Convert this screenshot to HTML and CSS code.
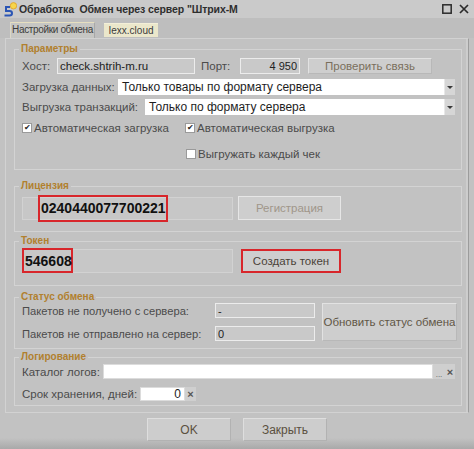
FILE: index.html
```html
<!DOCTYPE html>
<html lang="ru">
<head>
<meta charset="utf-8">
<title>Обмен через сервер</title>
<link rel="stylesheet" href="styles.css">
</head>
<body>
<div class="window">
  <div class="titlebar">
    <svg class="app-icon" width="14" height="15" viewBox="0 0 14 15">
      <path d="M2 5 H7 M3 5 V9 H6.5 Q9 9 9 11.2 Q9 13.5 6.5 13.5 H1.5" fill="none" stroke="#2a55b5" stroke-width="2"/>
      <circle cx="10.5" cy="3.8" r="3.2" fill="#f7d54a" stroke="#e0a020" stroke-width="0.8"/>
    </svg>
    <span class="title">Обработка&nbsp; Обмен через сервер "Штрих-М</span>
    <div class="win-ctrls">
      <svg width="10" height="10" viewBox="0 0 10 10"><rect x="0.8" y="0.8" width="8.4" height="8.4" fill="none" stroke="#2b2b2b" stroke-width="1.5"/></svg>
      <svg width="10" height="10" viewBox="0 0 10 10"><path d="M1 1 L9 9 M9 1 L1 9" stroke="#2b2b2b" stroke-width="1.7"/></svg>
    </div>
  </div>

  <div class="tabs">
    <div class="tab tab-active">Настройки обмена</div>
    <div class="tab tab-cloud">Iexx.cloud</div>
  </div>

  <div class="panel">
    <fieldset class="group g-params">
      <legend>Параметры</legend>
      <div class="row r-host">
        <span class="lbl w-host">Хост:</span>
        <div class="field grey host">check.shtrih-m.ru</div>
        <span class="lbl w-port">Порт:</span>
        <div class="field grey port">4 950</div>
        <div class="btn btn-check">Проверить связь</div>
      </div>
      <div class="row r-sel1">
        <span class="lbl w-sel1">Загрузка данных:</span>
        <div class="select sel1"><span class="sel-text">Только товары по формату сервера</span><span class="drop"></span></div>
      </div>
      <div class="row r-sel2">
        <span class="lbl w-sel2">Выгрузка транзакций:</span>
        <div class="select sel2"><span class="sel-text">Только по формату сервера</span><span class="drop"></span></div>
      </div>
      <div class="row r-checks">
        <label class="check w-check1"><span class="box on">✔</span>Автоматическая загрузка</label>
        <label class="check"><span class="box on">✔</span>Автоматическая выгрузка</label>
      </div>
      <div class="row r-check3">
        <label class="check"><span class="box"></span>Выгружать каждый чек</label>
      </div>
    </fieldset>

    <fieldset class="group g-license">
      <legend>Лицензия</legend>
      <div class="row r-license">
        <div class="field code-field lic-field"><span class="redbox lic-code">0240440077700221</span></div>
        <div class="btn btn-reg">Регистрация</div>
      </div>
    </fieldset>

    <fieldset class="group g-token">
      <legend>Токен</legend>
      <div class="row r-token">
        <div class="field code-field tok-field"><span class="redbox tok-code">546608</span></div>
        <div class="btn btn-token">Создать токен</div>
      </div>
    </fieldset>

    <fieldset class="group g-status">
      <legend>Статус обмена</legend>
      <div class="status-grid">
        <span class="lbl st-l1">Пакетов не получено с сервера:</span>
        <div class="field grey st-in st-i1">-</div>
        <span class="lbl st-l2">Пакетов не отправлено на сервер:</span>
        <div class="field grey st-in st-i2">0</div>
        <div class="btn btn-status">Обновить статус обмена</div>
      </div>
    </fieldset>

    <fieldset class="group g-log">
      <legend>Логирование</legend>
      <div class="row r-log1">
        <span class="lbl w-log1">Каталог логов:</span>
        <div class="field white log-dir"></div>
        <span class="mini dots">...</span>
        <span class="mini clr">×</span>
      </div>
      <div class="row r-log2">
        <span class="lbl w-log2">Срок хранения, дней:</span>
        <div class="field white log-days">0</div>
        <span class="mini clr">×</span>
      </div>
    </fieldset>
  </div>

  <div class="footer">
    <div class="btn btn-foot">OK</div>
    <div class="btn btn-foot">Закрыть</div>
  </div>
</div>
</body>
</html>
```

FILE: styles.css
```css
* { box-sizing: border-box; }

html, body {
  margin: 0;
  padding: 0;
}

body {
  width: 474px;
  height: 449px;
  overflow: hidden;
  background: #b4b4b4;
  font-family: "Liberation Sans", Arial, sans-serif;
  font-size: 11px;
  color: #4a4a4a;
}

.window {
  width: 474px;
  height: 449px;
  background: linear-gradient(#c2c2c2 0, #c2c2c2 438px, #a9a9a9 449px);
  display: flex;
  flex-direction: column;
}

/* Title bar */
.titlebar {
  height: 18px;
  background: #cacaca;
  display: flex;
  align-items: center;
  padding-left: 3px;
  padding-right: 5px;
}
.app-icon { flex: none; }
.title {
  margin-left: 2px;
  font-weight: bold;
  font-size: 10.5px;
  color: #2e2e2e;
  letter-spacing: -0.1px;
  white-space: nowrap;
}
.win-ctrls {
  margin-left: auto;
  display: flex;
  gap: 7px;
  align-items: center;
}

/* Tabs */
.tabs {
  height: 20px;
  background: #bebebe;
  display: flex;
  align-items: flex-end;
  padding-left: 10px;
  gap: 9px;
}
.tab {
  flex: none;
  height: 15px;
  line-height: 14px;
  font-size: 10px;
  padding: 0;
  text-align: center;
  color: #3c3c3c;
  white-space: nowrap;
  overflow: hidden;
}
.tab-active {
  width: 85px;
  height: 16px;
  letter-spacing: -0.35px;
  background: #c6c6c3;
  border-top: 1px solid #e6dfc0;
  border-left: 1px solid #dcd8c8;
  border-right: 1px solid #a8a8a8;
}
.tab-cloud {
  width: 54px;
  height: 14px;
  background: #ebe7cb;
  border-top: 1px solid #f3efd8;
  margin-bottom: 1px;
}

/* Panel */
.panel {
  margin-left: 5px;
  width: 464px;
  border: 1px solid #d2d2d2;
  border-right-color: #9c9c9c;
  box-shadow: inset -2px 0 0 #cdcdcd;
  padding: 4px 6px 6px 8px;
  display: flex;
  flex-direction: column;
}

.group {
  margin: 0;
  padding: 0 5px 0 7px;
  border: 1px solid #d3d3d3;
  min-width: 0;
}
.group legend {
  font-size: 10px;
  line-height: 12px;
  font-weight: bold;
  color: #b1802e;
  padding: 0 2px;
  margin-left: -3px;
}

.row {
  display: flex;
  align-items: center;
}

.lbl {
  flex: none;
  white-space: nowrap;
  color: #4b4b4b;
}

.field {
  flex: none;
  white-space: nowrap;
  overflow: hidden;
}
.grey {
  background: #c9c9c9;
  border: 1.5px solid #ececec;
  color: #222;
  font-size: 11px;
  display: flex;
  align-items: center;
  padding: 0 2px;
}
.white {
  background: #ffffff;
  border: 1px solid #dcdcdc;
  color: #222;
  display: flex;
  align-items: center;
  padding: 0 3px;
}

.btn {
  flex: none;
  background: #cecece;
  border: 1px solid #e2e2e2;
  border-right-color: #b8b8b8;
  border-bottom-color: #b8b8b8;
  display: flex;
  align-items: center;
  justify-content: center;
  color: #615646;
  font-size: 11px;
  white-space: nowrap;
}

/* Params */
.g-params { padding-bottom: 8px; }
.r-host { margin-top: 3px; height: 16px; }
.w-host { width: 35px; font-size: 11.5px; }
.host { width: 138px; height: 16px; font-size: 11.5px; }
.w-port { width: 39px; margin-left: 6px; font-size: 11.5px; }
.port { width: 60px; height: 16px; justify-content: flex-end; }
.btn-check { width: 124px; height: 16px; margin-left: 8px; color: #7a6e5c; font-size: 11.5px; }

.r-sel1 { margin-top: 5px; height: 16px; }
.r-sel2 { margin-top: 4px; height: 16px; }
.w-sel1 { width: 96px; font-size: 11.5px; }
.w-sel2 { width: 123px; font-size: 11.5px; }
.select {
  flex: none;
  height: 16px;
  background: #fff;
  display: flex;
  align-items: stretch;
}
.sel1 { width: 337px; }
.sel2 { width: 310px; }
.sel-text {
  flex: 1;
  padding-left: 4px;
  font-size: 12px;
  line-height: 16px;
  color: #1e1e1e;
  white-space: nowrap;
  overflow: hidden;
}
.drop {
  width: 11px;
  background: #d6d6d6;
  border-left: 1px solid #e8e8e8;
  display: flex;
  align-items: center;
  justify-content: center;
}
.drop::after {
  content: "";
  border-left: 3px solid transparent;
  border-right: 3px solid transparent;
  border-top: 3px solid #3a3a3a;
}

.r-checks { margin-top: 6px; height: 14px; }
.r-check3 { margin-top: 12px; height: 14px; padding-left: 164px; }
.check {
  display: flex;
  align-items: center;
  white-space: nowrap;
  font-size: 11.5px;
  color: #4b4b4b;
}
.w-check1 { width: 163px; }
.box {
  width: 10px;
  height: 10px;
  background: #fff;
  border: 1px solid #9a9a9a;
  margin-right: 2px;
  font-size: 8px;
  line-height: 8px;
  color: #222;
  text-align: center;
}

/* License / token */
.g-license { margin-top: 10px; padding-bottom: 11px; }
.r-license { margin-top: 4px; height: 24px; }
.code-field {
  width: 211px;
  background: #c7c7c7;
  border: 1px solid #d2d2d2;
  display: flex;
  align-items: center;
  overflow: visible;
}
.lic-field { height: 23px; padding-left: 15px; }
.redbox {
  border: 2px solid #d8262b;
  font-weight: bold;
  font-size: 14px;
  color: #111;
  display: flex;
  align-items: center;
}
.lic-code { height: 27px; width: 130px; padding-left: 1px; margin: 0; }
.btn-reg { width: 103px; height: 24px; margin-left: 5px; color: #a0968a; font-size: 11.5px; border-color: #e6e6e6; }

.g-token { margin-top: 3px; padding-bottom: 12px; }
.r-token { margin-top: 1px; height: 25px; }
.tok-field { height: 24px; padding-left: 0; margin-left: 0; }
.tok-code { height: 25px; width: 51px; margin-left: -1px; padding-left: 1px; }
.btn-token {
  width: 100px;
  height: 24px;
  margin-left: 8px;
  border: 2px solid #d8262b;
  color: #4a4238;
  font-size: 11.5px;
}

/* Status */
.g-status { margin-top: 5px; padding-bottom: 7px; }
.status-grid {
  display: grid;
  grid-template-columns: 193px 100px 133px;
  grid-template-rows: 15px 15px;
  row-gap: 8px;
  column-gap: 0;
  align-items: center;
}
.st-l1, .st-l2 { font-size: 11.2px; }
.st-in { height: 15px; width: 100px; }
.st-l1 { grid-column: 1; grid-row: 1; }
.st-i1 { grid-column: 2; grid-row: 1; }
.st-l2 { grid-column: 1; grid-row: 2; }
.st-i2 { grid-column: 2; grid-row: 2; }
.btn-status {
  grid-column: 3;
  grid-row: 1 / span 2;
  height: 38px;
  margin-left: 7px;
  width: 135px;
  font-size: 11.5px;
}

/* Logging */
.g-log { margin-top: 2px; padding-bottom: 4px; }
.r-log1 { margin-top: 1px; height: 15px; }
.r-log2 { margin-top: 8px; height: 14px; }
.w-log1 { width: 81px; font-size: 11.5px; }
.w-log2 { width: 118px; font-size: 11.5px; }
.log-dir { width: 330px; height: 15px; }
.log-days { width: 45px; height: 14px; justify-content: flex-end; font-size: 12px; }
.mini {
  flex: none;
  height: 15px;
  background: #cfcfcf;
  display: flex;
  align-items: center;
  justify-content: center;
  color: #555;
  font-size: 10px;
}
.dots { width: 12px; align-items: flex-end; font-size: 8px; line-height: 8px; }
.clr { width: 10px; font-weight: bold; font-size: 11px; }
.r-log2 .clr { width: 11px; height: 14px; }

/* Footer */
.footer {
  margin-top: 5px;
  display: flex;
  justify-content: center;
  gap: 12px;
}
.btn-foot {
  width: 84px;
  height: 23px;
  font-size: 12px;
  color: #5b5040;
  background: #cdcdcd;
  border: 1px solid #dedede;
  border-right-color: #b2b2b2;
  border-bottom-color: #b2b2b2;
}
```
